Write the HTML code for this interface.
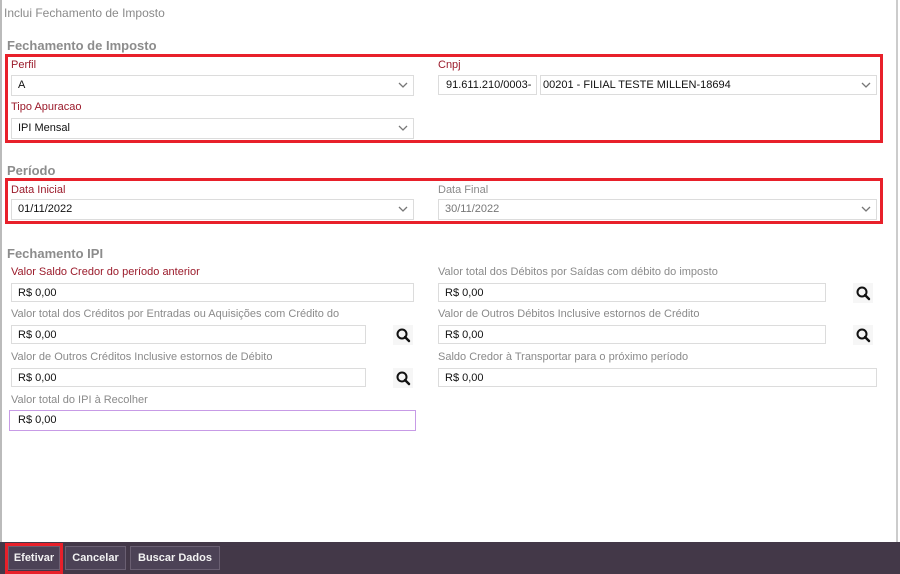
<!DOCTYPE html>
<html><head><meta charset="utf-8"><style>
*{box-sizing:border-box;margin:0;padding:0}
body{width:900px;height:574px;position:relative;background:#fff;font-family:"Liberation Sans",sans-serif;overflow:hidden}
.a{position:absolute}
.t{position:absolute;left:4px;top:6px;font-size:12px;color:#8a8a8a}
.h{position:absolute;font-size:13px;font-weight:bold;color:#8c8c8c}
.l{position:absolute;font-size:11px;color:#8a8a8a;white-space:nowrap}
.r{color:#9b1b2b}
.in{position:absolute;border:1px solid #dcdcdc;background:#fff;font-size:11px;color:#111;padding-left:6px;line-height:18px;white-space:nowrap;overflow:hidden}
.dis{color:#777}
.chev{position:absolute;right:5px;top:4px}
.box{position:absolute;border:3px solid #e8202a}
.q{position:absolute;width:20px;height:20px;background:#f6f6f6}
.ft{position:absolute;left:0;top:542px;width:900px;height:32px;background:#433848}
.b{position:absolute;top:546px;height:24px;background:#4c4256;border:1px solid #6a5f72;color:#f2f2f2;font-size:11px;font-weight:bold;text-align:center;line-height:22px}
</style></head><body>
<div class="a" style="left:0;top:0;width:2px;height:542px;background:#bbb"></div>
<div class="a" style="left:896px;top:0;width:2px;height:542px;background:#ccc"></div>
<div class="t">Inclui Fechamento de Imposto</div>

<div class="h" style="left:7px;top:38px">Fechamento de Imposto</div>
<div class="box" style="left:5px;top:54px;width:878px;height:89px"></div>
<div class="l r" style="left:11px;top:59px">Perfil</div>
<div class="in" style="left:11px;top:75px;width:403px;height:21px">A<svg class="chev" width="10" height="10"><path d="M1 3l4 4 4-4" fill="none" stroke="#777" stroke-width="1.3"/></svg></div>
<div class="l r" style="left:11px;top:101px">Tipo Apuracao</div>
<div class="in" style="left:11px;top:118px;width:403px;height:21px">IPI Mensal<svg class="chev" width="10" height="10"><path d="M1 3l4 4 4-4" fill="none" stroke="#777" stroke-width="1.3"/></svg></div>
<div class="l r" style="left:438px;top:59px">Cnpj</div>
<div class="in" style="left:438px;top:75px;width:99px;height:20px;padding-left:7px">91.611.210/0003-</div>
<div class="in" style="left:540px;top:75px;width:337px;height:20px;padding-left:2px">00201 - FILIAL TESTE MILLEN-18694<svg class="chev" width="10" height="10"><path d="M1 3l4 4 4-4" fill="none" stroke="#777" stroke-width="1.3"/></svg></div>

<div class="h" style="left:7px;top:163px">Período</div>
<div class="box" style="left:5px;top:178px;width:878px;height:46px"></div>
<div class="l r" style="left:11px;top:184px">Data Inicial</div>
<div class="in" style="left:11px;top:199px;width:403px;height:21px">01/11/2022<svg class="chev" width="10" height="10"><path d="M1 3l4 4 4-4" fill="none" stroke="#777" stroke-width="1.3"/></svg></div>
<div class="l" style="left:438px;top:184px">Data Final</div>
<div class="in dis" style="left:438px;top:199px;width:439px;height:21px">30/11/2022<svg class="chev" width="10" height="10"><path d="M1 3l4 4 4-4" fill="none" stroke="#777" stroke-width="1.3"/></svg></div>

<div class="h" style="left:7px;top:246px">Fechamento IPI</div>
<div class="l r" style="left:11px;top:266px">Valor Saldo Credor do período anterior</div>
<div class="in" style="left:11px;top:283px;width:403px;height:19px">R$ 0,00</div>
<div class="l" style="left:11px;top:308px">Valor total dos Créditos por Entradas ou Aquisições com Crédito do</div>
<div class="in" style="left:11px;top:325px;width:355px;height:19px">R$ 0,00</div>
<div class="l" style="left:11px;top:351px">Valor de Outros Créditos Inclusive estornos de Débito</div>
<div class="in" style="left:11px;top:368px;width:355px;height:19px">R$ 0,00</div>
<div class="l" style="left:11px;top:394px">Valor total do IPI à Recolher</div>
<div class="in" style="left:9px;top:410px;width:407px;height:21px;border-color:#c79be6;line-height:19px;padding-left:8px">R$ 0,00</div>

<div class="l" style="left:438px;top:266px">Valor total dos Débitos por Saídas com débito do imposto</div>
<div class="in" style="left:438px;top:283px;width:388px;height:19px">R$ 0,00</div>
<div class="l" style="left:438px;top:308px">Valor de Outros Débitos Inclusive estornos de Crédito</div>
<div class="in" style="left:438px;top:325px;width:388px;height:19px">R$ 0,00</div>
<div class="l" style="left:438px;top:351px">Saldo Credor à Transportar para o próximo período</div>
<div class="in" style="left:438px;top:368px;width:439px;height:19px">R$ 0,00</div>

<svg class="q" style="left:393px;top:325px" viewBox="0 0 20 20"><circle cx="9" cy="9" r="4.5" fill="none" stroke="#111" stroke-width="2"/><path d="M12 12l4 4" stroke="#111" stroke-width="2.4" stroke-linecap="round"/></svg>
<svg class="q" style="left:393px;top:368px" viewBox="0 0 20 20"><circle cx="9" cy="9" r="4.5" fill="none" stroke="#111" stroke-width="2"/><path d="M12 12l4 4" stroke="#111" stroke-width="2.4" stroke-linecap="round"/></svg>
<svg class="q" style="left:853px;top:283px" viewBox="0 0 20 20"><circle cx="9" cy="9" r="4.5" fill="none" stroke="#111" stroke-width="2"/><path d="M12 12l4 4" stroke="#111" stroke-width="2.4" stroke-linecap="round"/></svg>
<svg class="q" style="left:853px;top:325px" viewBox="0 0 20 20"><circle cx="9" cy="9" r="4.5" fill="none" stroke="#111" stroke-width="2"/><path d="M12 12l4 4" stroke="#111" stroke-width="2.4" stroke-linecap="round"/></svg>

<div class="ft"></div>
<div class="b" style="left:8px;width:52px">Efetivar</div>
<div class="a" style="left:5px;top:543px;width:58px;height:31px;border:3px solid #e8202a"></div>
<div class="b" style="left:65px;width:61px">Cancelar</div>
<div class="b" style="left:130px;width:90px">Buscar Dados</div>
</body></html>
